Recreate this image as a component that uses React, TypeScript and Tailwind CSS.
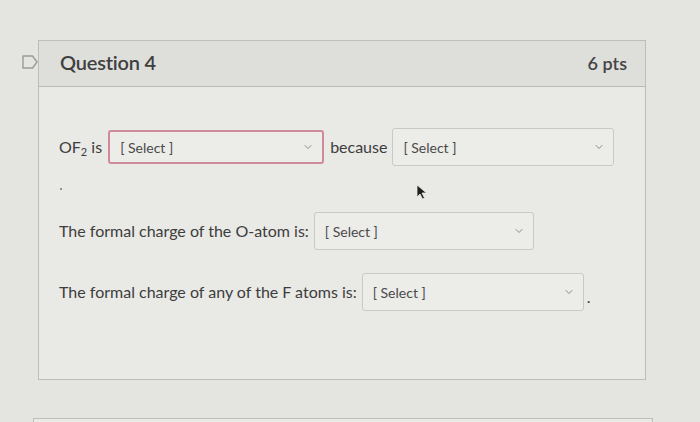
import { ChevronDown } from 'lucide-react';

function Select({ w, h, danger }: { w: string; h: string; danger?: boolean }) {
  return (
    <div
      className={`${w} ${h} flex items-center justify-between rounded-[3px] border bg-[#ecece9] pl-[10px] pr-[8px] ${
        danger ? 'border-[#cf8a9c] border-2' : 'border-[#c9c9c6]'
      }`}
    >
      <span className="text-[14px] text-[#4a4a4a]">[ Select ]</span>
      <ChevronDown className="h-[12px] w-[12px] text-[#8a8a8a]" strokeWidth={2} />
    </div>
  );
}

function Cursor() {
  return (
    <svg width="12" height="16" viewBox="0 0 12 16" className="absolute left-[416px] top-[184px]">
      <path d="M1 1 L1 13 L4 10 L6.5 15 L8.5 14 L6 9 L10.5 9 Z" fill="#1e1e1e" stroke="#e8e8e8" strokeWidth="0.8" />
    </svg>
  );
}

export default function App() {
  return (
    <div
      className="relative h-[422px] w-[700px] overflow-hidden bg-[#e4e4e1] text-[#3d3d3d]"
      style={{ fontFamily: 'Lato, "Open Sans", sans-serif' }}
    >
      <Cursor />
      <div className="flex pt-[40px]">
        <div className="w-[38px] pl-[22px] pt-[15px]">
          <svg width="16" height="14" viewBox="0 0 16 14">
            <path d="M1 1 H10.5 L15 7 L10.5 13 H1 Z" fill="none" stroke="#9a9a9a" strokeWidth="1.4" strokeLinejoin="round" />
          </svg>
        </div>
        <div className="flex flex-col">
          <div className="h-[340px] w-[608px] border border-[#bdbdba] bg-[#e9e9e6]">
            <div className="flex h-[46px] items-center justify-between border-b border-[#b9b9b6] bg-[#dededb] pl-[21px] pr-[18px]">
              <span className="-mt-[4px] text-[20px] font-semibold tracking-[-0.2px] text-[#3f3f3f]">Question 4</span>
              <span className="text-[18px] font-semibold text-[#444]">6 pts</span>
            </div>
            <div className="flex flex-col pl-[20px] pt-[41px] text-[16px]">
              <div className="flex items-center">
                <span>
                  OF<sub className="text-[11px]">2</sub> is
                </span>
                <div className="ml-[6px]">
                  <Select w="w-[216px]" h="h-[34px]" danger />
                </div>
                <span className="ml-[6px]">because</span>
                <div className="ml-[5px]">
                  <Select w="w-[222px]" h="h-[38px]" />
                </div>
              </div>
              <div className="mt-[22px] h-[4px] pl-[1px] leading-none">
                <span className="block h-[2px] w-[2px] rounded-full bg-[#777]" />
              </div>
              <div className="mt-[20px] flex items-center">
                <span>The formal charge of the O-atom is:</span>
                <div className="ml-[5px]">
                  <Select w="w-[220px]" h="h-[38px]" />
                </div>
              </div>
              <div className="mt-[23px] flex items-center">
                <span>The formal charge of any of the F atoms is:</span>
                <div className="ml-[5px]">
                  <Select w="w-[222px]" h="h-[38px]" />
                </div>
                <span className="ml-[3px] mt-[10px]">.</span>
              </div>
            </div>
          </div>
          <div className="mt-[38px] h-[40px] w-[620px] -ml-[5px] border border-[#bdbdba] bg-[#e9e9e6]" />
        </div>
      </div>
    </div>
  );
}
